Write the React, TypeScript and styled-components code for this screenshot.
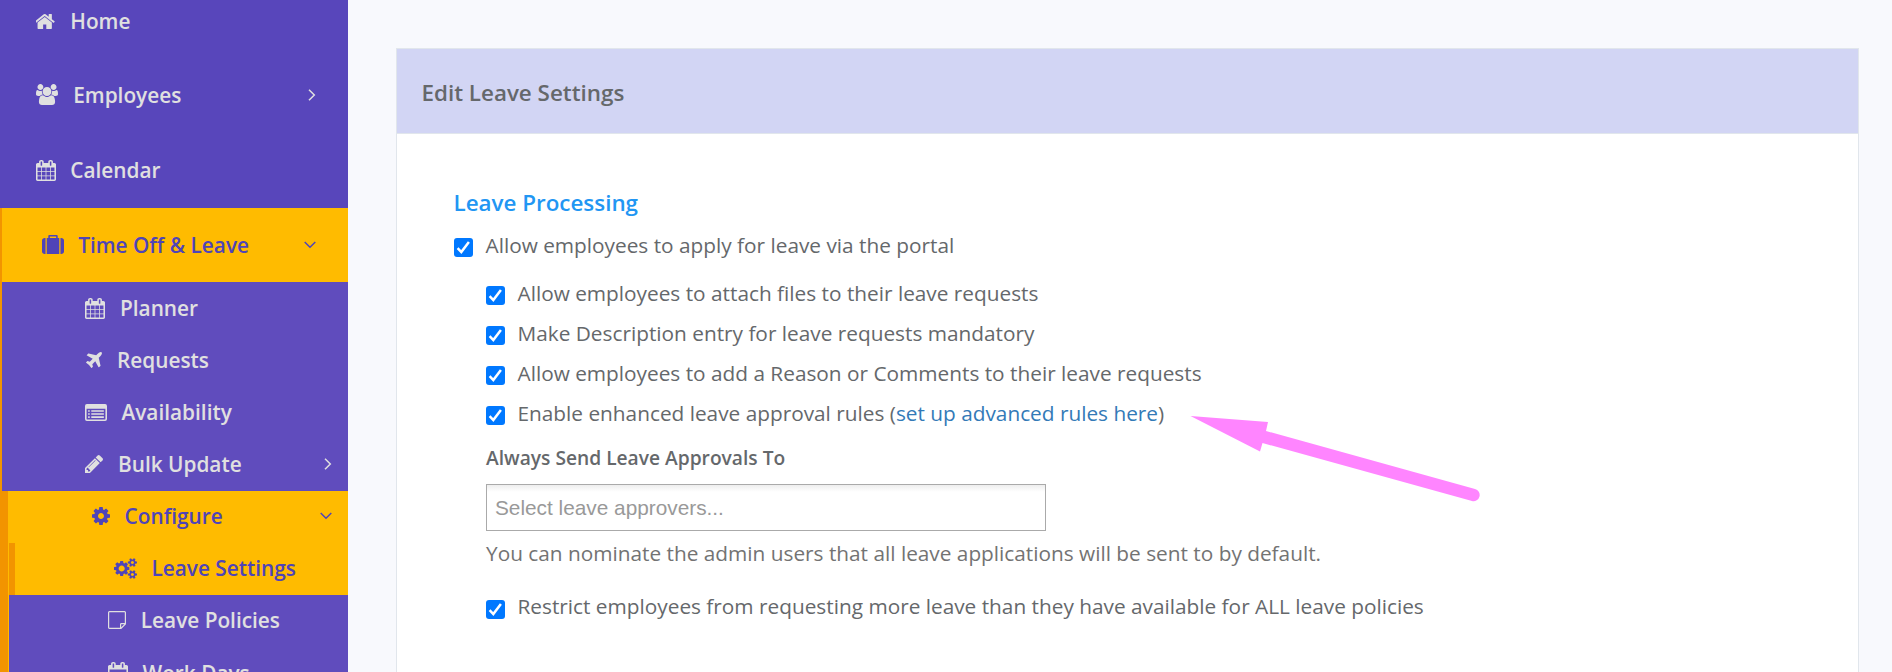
import React from "react";
import styled, { createGlobalStyle, css } from "styled-components";

const GlobalStyle = createGlobalStyle`
  * { box-sizing: border-box; }
  html, body { margin: 0; padding: 0; height: 672px; overflow: hidden; }
  body { background: #f8f9fd; font-family: "Open Sans", "Noto Sans", sans-serif; color: #65686b; }
`;

const Page = styled.div`
  position: relative;
  display: flex;
  width: 1892px;
  height: 672px;
  overflow: hidden;
`;

/* Sidebar */
const Sidebar = styled.nav`
  flex: none;
  width: 348px;
  height: 672px;
  overflow: hidden;
  background: #5846bb;
`;

const TopLevel = styled.div`
  margin-top: -15.5px;
`;

const ActiveBranch = styled.div<{ $edge: number }>`
  border-left: ${(p) => p.$edge}px solid #f29400;
`;

const ConfigureBranch = styled.div`
  margin-left: -2px;
  border-left: 8px solid #f29400;
  background: #ffbb00;
`;

const Submenu = styled.div`
  background: #604cbd;
`;

const NestedMenu = styled.div`
  margin-left: 1px;
  background: #604cbd;
`;

const NavRow = styled.a<{
  $pad: number;
  $gap: number;
  $tall?: boolean;
  $active?: boolean;
  $end?: number;
  $lift?: number;
}>`
  display: flex;
  align-items: center;
  height: ${(p) => (p.$tall ? (p.$active ? "74px" : "74.5px") : "52.2px")};
  padding-left: ${(p) => p.$pad}px;
  padding-right: ${(p) => p.$end ?? 0}px;
  padding-bottom: ${(p) => p.$lift ?? 0}px;
  gap: ${(p) => p.$gap}px;
  font-size: 20.8px;
  font-weight: 600;
  line-height: 30px;
  white-space: nowrap;
  color: #e0e0e0;
  ${(p) =>
    p.$active &&
    css`
      background: #ffbb00;
      color: #4f44b8;
    `}
`;

const CurrentRow = styled(NavRow)`
  border-left: 6px solid #f29400;
`;

const NavLabel = styled.span`
  flex: 1;
`;

const Glyph = styled.svg`
  flex: none;
  display: block;
  fill: currentColor;
`;

const Outline = styled.svg`
  flex: none;
  display: block;
  fill: none;
  stroke: currentColor;
  stroke-width: 1.2;
`;

const Chevron = styled(Outline)`
  stroke-width: 1.5;
`;

/* Content */
const Content = styled.main`
  flex: 1;
  padding: 48px 33px 0 48px;
`;

const Card = styled.section`
  height: 700px;
  background: #fff;
  border: 1px solid #e1e6ec;
`;

const CardHeader = styled.h1`
  display: flex;
  align-items: center;
  height: 85px;
  margin: 0;
  padding: 4px 0 0 24.5px;
  background: #d2d5f4;
  border-bottom: 1px solid #e1e6ec;
  font-size: 22.4px;
  font-weight: 600;
  line-height: 30px;
  color: #65686b;
`;

const Form = styled.form`
  display: flex;
  flex-direction: column;
  padding: 54px 0 0 57px;
  font-size: 20.8px;
`;

const SectionTitle = styled.h2`
  margin: 0 0 0 -0.5px;
  font-size: 22.4px;
  font-weight: 600;
  line-height: 30px;
  color: #2196f3;
`;

const Nested = styled.div`
  display: flex;
  flex-direction: column;
  padding-left: 32px;
`;

const Box = styled.span`
  display: flex;
  flex: none;
  width: 19px;
  height: 19px;
  margin-top: 5px;
  border-radius: 3px;
  background: #0078ff;
`;

const Option = styled.label<{ $top?: number }>`
  display: flex;
  align-items: center;
  gap: 12.5px;
  height: 40px;
  margin-top: ${(p) => p.$top ?? 0}px;
  line-height: 30px;
  white-space: nowrap;
`;

const FinalOption = styled(Option)`
  ${Box} {
    margin-top: 7px;
  }
`;

const Link = styled.a`
  color: #337ab7;
`;

const FieldLabel = styled.div`
  margin-top: 10px;
  font-size: 19.2px;
  font-weight: 600;
  line-height: 30px;
`;

const Field = styled.div`
  display: flex;
  align-items: center;
  width: 560px;
  height: 47px;
  margin-top: 11px;
  padding: 1px 0 0 8px;
  border: 1px solid #aaa;
  background: linear-gradient(#eee 0, #fff 7px);
  font-family: "Liberation Sans", Arial, sans-serif;
  font-size: 20.8px;
  color: #999;
`;

const Help = styled.div`
  margin-top: 7px;
  line-height: 30px;
  color: #737373;
`;

const Pointer = styled.svg`
  position: absolute;
  left: 1190px;
  top: 415px;
  fill: #ff85ff;
`;

const PATHS = {
  home: "M1408 992v480q0 26-19 45t-45 19h-384v-384h-256v384h-384q-26 0-45-19t-19-45v-480q0-1 .5-3t.5-3l575-474 575 474q1 2 1 6zm223-69l-62 74q-8 9-21 11h-3q-13 0-21-7l-692-577-692 577q-12 8-24 7-13-2-21-11l-62-74q-8-10-7-23.5t11-21.5l719-599q32-26 76-26t76 26l244 204v-195q0-14 9-23t23-9h192q14 0 23 9t9 23v408l219 182q10 8 11 21.5t-7 23.5z",
  users: "M593 896q-162 5-265 128h-134q-82 0-138-40.5t-56-118.5q0-353 124-353 6 0 43.5 21t97.5 42.5 119 21.5q67 0 133-23-5 37-5 66 0 139 81 256zm1071 637q0 120-73 189.5t-194 69.5h-874q-121 0-194-69.5t-73-189.5q0-53 3.5-103.5t14-109 26.5-108.5 43-97.5 62-81 85.5-53.5 111.5-20q10 0 43 21.5t73 48 107 48 135 21.5 135-21.5 107-48 73-48 43-21.5q61 0 111.5 20t85.5 53.5 62 81 43 97.5 26.5 108.5 14 109 3.5 103.5zm-1024-1277q0 106-75 181t-181 75-181-75-75-181 75-181 181-75 181 75 75 181zm704 384q0 159-112.5 271.5t-271.5 112.5-271.5-112.5-112.5-271.5 112.5-271.5 271.5-112.5 271.5 112.5 112.5 271.5zm576 225q0 78-56 118.5t-138 40.5h-134q-103-123-265-128 81-117 81-256 0-29-5-66 66 23 133 23 59 0 119-21.5t97.5-42.5 43.5-21q124 0 124 353zm-128-609q0 106-75 181t-181 75-181-75-75-181 75-181 181-75 181 75 75 181z",
  calendar: "M192 1664h288v-288h-288v288zm352 0h320v-288h-320v288zm-352-352h288v-320h-288v320zm352 0h320v-320h-320v320zm-352-384h288v-288h-288v288zm736 736h320v-288h-320v288zm-384-736h320v-288h-320v288zm768 736h288v-288h-288v288zm-384-352h320v-320h-320v320zm-352-864v-288q0-13-9.5-22.5t-22.5-9.5h-64q-13 0-22.5 9.5t-9.5 22.5v288q0 13 9.5 22.5t22.5 9.5h64q13 0 22.5-9.5t9.5-22.5zm736 864h288v-320h-288v320zm-384-384h320v-288h-320v288zm384 0h288v-288h-288v288zm32-480v-288q0-13-9.5-22.5t-22.5-9.5h-64q-13 0-22.5 9.5t-9.5 22.5v288q0 13 9.5 22.5t22.5 9.5h64q13 0 22.5-9.5t9.5-22.5zm384-64v1280q0 52-38 90t-90 38h-1408q-52 0-90-38t-38-90v-1280q0-52 38-90t90-38h128v-96q0-66 47-113t113-47h64q66 0 113 47t47 113v96h384v-96q0-66 47-113t113-47h64q66 0 113 47t47 113v96h128q52 0 90 38t38 90z",
  calendarOpen: "M192 1664h1408v-1024h-1408v1024zm384-1216v-288q0-14-9-23t-23-9h-64q-14 0-23 9t-9 23v288q0 14 9 23t23 9h64q14 0 23-9t9-23zm768 0v-288q0-14-9-23t-23-9h-64q-14 0-23 9t-9 23v288q0 14 9 23t23 9h64q14 0 23-9t9-23zm384-64v1280q0 52-38 90t-90 38h-1408q-52 0-90-38t-38-90v-1280q0-52 38-90t90-38h128v-96q0-66 47-113t113-47h64q66 0 113 47t47 113v96h384v-96q0-66 47-113t113-47h64q66 0 113 47t47 113v96h128q52 0 90 38t38 90z",
  suitcase: "M640 256h512v-128h-512v128zm-352 0v1408h-64q-92 0-158-66t-66-158v-960q0-92 66-158t158-66h64zm1120 0v1408h-1024v-1408h128v-160q0-40 28-68t68-28h576q40 0 68 28t28 68v160h128zm384 224v960q0 92-66 158t-158 66h-64v-1408h64q92 0 158 66t66 158z",
  plane: "M1568 160q44 52 12 148t-108 172l-161 161 160 696q5 19-12 33l-128 96q-7 6-19 6-4 0-7-1-15-3-21-16l-279-508-259 259 53 194q5 17-8 31l-96 96q-9 9-23 9h-2q-15-2-24-13l-189-252-252-189q-11-7-13-23-1-13 9-25l96-97q9-9 23-9 6 0 8 1l194 53 259-259-508-279q-14-8-17-24-2-16 9-27l128-128q14-13 30-8l665 159 160-160q76-76 172-108t148 12z",
  list: "M160 128h1472a160 160 0 0 1 160 160v1088a160 160 0 0 1-160 160h-1472a160 160 0 0 1-160-160v-1088a160 160 0 0 1 160-160zm-32 384v864a32 32 0 0 0 32 32h1472a32 32 0 0 0 32-32v-864zM256 640h128v128h-128zM512 640h1024v128h-1024zM256 896h128v128h-128zM512 896h1024v128h-1024zM256 1152h128v128h-128zM512 1152h1024v128h-1024z",
  pencil: "M491 1536l91-91-235-235-91 91v107h128v128h107zm523-928q0-22-22-22-10 0-17 7l-542 542q-7 7-7 17 0 22 22 22 10 0 17-7l542-542q7-7 7-17zm-54-192l416 416-832 832h-416v-416zm683 96q0 53-37 90l-166 166-416-416 166-165q36-38 90-38 53 0 91 38l235 234q37 39 37 91z",
  cog: "M1152 896q0-106-75-181t-181-75-181 75-75 181 75 181 181 75 181-75 75-181zm512-109v222q0 12-8 23t-20 13l-185 28q-19 54-39 91 35 50 107 138 10 12 10 25t-9 23q-27 37-99 108t-94 71q-12 0-26-9l-138-108q-44 23-91 38-16 136-29 186-7 28-36 28h-222q-14 0-24.5-8.5t-11.5-21.5l-28-184q-49-16-90-37l-141 107q-10 9-25 9-14 0-25-11-126-114-165-168-7-10-7-23 0-12 8-23 15-21 51-66.5t54-70.5q-27-50-41-99l-183-27q-13-2-21-12.5t-8-23.5v-222q0-12 8-23t19-13l186-28q14-46 39-92-40-57-107-138-10-12-10-24 0-10 9-23 26-36 98.5-107.5t94.5-71.5q13 0 26 10l138 107q44-23 91-38 16-136 29-186 7-28 36-28h222q14 0 24.5 8.5t11.5 21.5l28 184q49 16 90 37l142-107q9-9 24-9 13 0 25 10 129 119 165 170 7 8 7 22 0 12-8 23-15 21-51 66.5t-54 70.5q26 50 41 98l183 28q13 2 21 12.5t8 23.5z",
  cogs: "M832 896q0-106-75-181t-181-75-181 75-75 181 75 181 181 75 181-75 75-181zm768 512q0-52-38-90t-90-38-90 38-38 90q0 53 37.5 90.5t90.5 37.5 90.5-37.5 37.5-90.5zm0-1024q0-52-38-90t-90-38-90 38-38 90q0 53 37.5 90.5t90.5 37.5 90.5-37.5 37.5-90.5zm-384 421v185q0 10-7 19.5t-16 10.5l-155 24q-11 35-32 76 34 48 90 115 7 11 7 20 0 12-7 19-23 30-82.5 89.5t-78.5 59.5q-11 0-21-7l-115-90q-37 19-77 31-11 108-23 155-7 24-30 24h-186q-11 0-20-7.5t-10-17.5l-23-153q-34-10-75-31l-118 89q-7 7-20 7-11 0-21-8-144-133-144-160 0-9 7-19 10-14 41-53t47-61q-23-44-35-82l-152-24q-10-1-17-9.5t-7-19.5v-185q0-10 7-19.5t16-10.5l155-24q11-35 32-76-34-48-90-115-7-11-7-20 0-12 7-20 22-30 82-89t79-59q11 0 21 7l115 90q34-18 77-32 11-108 23-154 7-24 30-24h186q11 0 20 7.5t10 17.5l23 153q34 10 75 31l118-89q8-7 20-7 11 0 21 8 144 133 144 160 0 8-7 19-12 16-42 54t-45 60q23 48 34 82l152 23q10 2 17 10.5t7 19.5zm640 533v140q0 16-149 31-12 27-30 52 51 113 51 138 0 4-4 7-122 71-124 71-8 0-46-47t-52-68q-20 2-30 2t-30-2q-14 21-52 68t-46 47q-2 0-124-71-4-3-4-7 0-25 51-138-18-25-30-52-149-15-149-31v-140q0-16 149-31 13-29 30-52-51-113-51-138 0-4 4-7 4-2 35-20t59-34 30-16q8 0 46 46.5t52 67.5q20-2 30-2t30 2q51-71 92-112l6-2q4 0 124 70 4 3 4 7 0 25-51 138 17 23 30 52 149 15 149 31zm0-1024v140q0 16-149 31-12 27-30 52 51 113 51 138 0 4-4 7-122 71-124 71-8 0-46-47t-52-68q-20 2-30 2t-30-2q-14 21-52 68t-46 47q-2 0-124-71-4-3-4-7 0-25 51-138-18-25-30-52-149-15-149-31v-140q0-16 149-31 13-29 30-52-51-113-51-138 0-4 4-7 4-2 35-20t59-34 30-16q8 0 46 46.5t52 67.5q20-2 30-2t30 2q51-71 92-112l6-2q4 0 124 70 4 3 4 7 0 25-51 138 17 23 30 52 149 15 149 31z",
};

type IconName = keyof typeof PATHS;

const Icon = ({ name, w, h, box }: { name: IconName; w: number; h: number; box: string }) => (
  <Glyph width={w} height={h} viewBox={box} preserveAspectRatio="none">
    <path d={PATHS[name]} fillRule={name === "list" ? "evenodd" : "nonzero"} />
  </Glyph>
);

const NoteIcon = () => (
  <Outline width="18" height="18" viewBox="0 0 18 18">
    <path d="M1.4.6H16.6a.8.8 0 0 1 .8.8V13L13 17.4H1.4a.8.8 0 0 1-.8-.8V1.4a.8.8 0 0 1 .8-.8ZM12.6 17.4V13.4a.8.8 0 0 1 .8-.8H17.4" />
  </Outline>
);

const AngleRight = () => (
  <Chevron width="8" height="12" viewBox="0 0 8 12"><path d="M1 .7 6.3 6 1 11.3" /></Chevron>
);
const AngleDown = () => (
  <Chevron width="12" height="8" viewBox="0 0 12 8"><path d="M.7 1 6 6.3 11.3 1" /></Chevron>
);

const Check = () => (
  <Box>
    <svg width="19" height="19" viewBox="0 0 19 19" fill="none" stroke="#fff" strokeWidth="2.5">
      <path d="M3.6 10.2 7.3 14 14.9 3.9" />
    </svg>
  </Box>
);

export default function App() {
  return (
    <Page>
      <GlobalStyle />
      <Sidebar>
        <TopLevel>
          <NavRow $tall $lift={0.8} $pad={36} $gap={15.3}>
            <Icon name="home" w={19} h={15} box="131 253 1530 1283" />
            <NavLabel>Home</NavLabel>
          </NavRow>
          <NavRow $tall $lift={2.6} $pad={36} $gap={15.2} $end={32}>
            <Icon name="users" w={22} h={21} box="0 0 1920 1792" />
            <NavLabel>Employees</NavLabel>
            <AngleRight />
          </NavRow>
          <NavRow $tall $lift={1.5} $pad={36} $gap={14.3}>
            <Icon name="calendar" w={20} h={21} box="64 0 1664 1792" />
            <NavLabel>Calendar</NavLabel>
          </NavRow>
        </TopLevel>
        <ActiveBranch $edge={2}>
          <NavRow $tall $active $lift={1} $pad={40} $gap={14.2} $end={32}>
            <Icon name="suitcase" w={22} h={19} box="0 0 1792 1664" />
            <NavLabel>Time Off &amp; Leave</NavLabel>
            <AngleDown />
          </NavRow>
          <Submenu>
            <NavRow $pad={83} $gap={15}>
              <Icon name="calendar" w={20} h={21} box="64 0 1664 1792" />
              <NavLabel>Planner</NavLabel>
            </NavRow>
            <NavRow $pad={84} $gap={15}>
              <Icon name="plane" w={16} h={16} box="190 128 1410 1410" />
              <NavLabel>Requests</NavLabel>
            </NavRow>
            <NavRow $pad={83} $gap={14.5}>
              <Icon name="list" w={22} h={17} box="0 128 1792 1408" />
              <NavLabel>Availability</NavLabel>
            </NavRow>
            <NavRow $lift={1} $pad={83} $gap={15} $end={16}>
              <Icon name="pencil" w={18} h={18} box="128 149 1515 1515" />
              <NavLabel>Bulk Update</NavLabel>
              <AngleRight />
            </NavRow>
            <ConfigureBranch>
              <NavRow $active $lift={1.6} $pad={84} $gap={14.6} $end={16.5}>
                <Icon name="cog" w={18} h={18} box="128 128 1536 1536" />
                <NavLabel>Configure</NavLabel>
                <AngleDown />
              </NavRow>
              <NestedMenu>
                <CurrentRow $active $lift={1.6} $pad={99} $gap={14.5}>
                  <Icon name="cogs" w={23} h={21} box="-64 0 1920 1792" />
                  <NavLabel>Leave Settings</NavLabel>
                </CurrentRow>
                <NavRow $lift={1.6} $pad={99} $gap={14.8}>
                  <NoteIcon />
                  <NavLabel>Leave Policies</NavLabel>
                </NavRow>
                <NavRow $lift={1.6} $pad={99} $gap={14.5}>
                  <Icon name="calendarOpen" w={20} h={21} box="64 0 1664 1792" />
                  <NavLabel>Work Days</NavLabel>
                </NavRow>
              </NestedMenu>
            </ConfigureBranch>
          </Submenu>
        </ActiveBranch>
      </Sidebar>
      <Content>
        <Card>
          <CardHeader>Edit Leave Settings</CardHeader>
          <Form>
            <SectionTitle>Leave Processing</SectionTitle>
            <Option $top={7}><Check />Allow employees to apply for leave via the portal</Option>
            <Nested>
              <Option $top={8}><Check />Allow employees to attach files to their leave requests</Option>
              <Option><Check />Make Description entry for leave requests mandatory</Option>
              <Option><Check />Allow employees to add a Reason or Comments to their leave requests</Option>
              <Option><Check /><span>Enable enhanced leave approval rules (<Link>set up advanced rules here</Link>)</span></Option>
              <FieldLabel>Always Send Leave Approvals To</FieldLabel>
              <Field>Select leave approvers...</Field>
              <Help>You can nominate the admin users that all leave applications will be sent to by default.</Help>
              <FinalOption $top={18}><Check />Restrict employees from requesting more leave than they have available for ALL leave policies</FinalOption>
            </Nested>
          </Form>
        </Card>
      </Content>
      <Pointer width="292" height="88" viewBox="1190 415 292 88">
        <path d="M1190.5 416 1268 422 1266 431 1475 489a6 6 0 0 1-3 12L1262.5 443 1260 451.5Z" />
      </Pointer>
    </Page>
  );
}
